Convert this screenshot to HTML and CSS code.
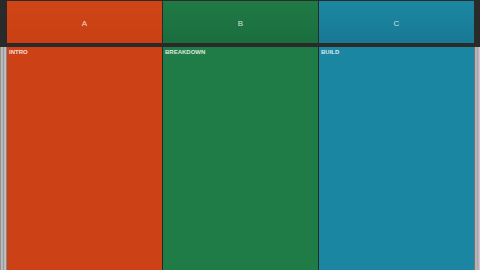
FILE: index.html
```html
<!DOCTYPE html>
<html lang="en">
<head>
    <meta charset="UTF-8">
    <title>Board</title>
    <link rel="stylesheet" href="styles.css">
</head>
<body>
    <div class="header">
        <div class="head-cell orange">A</div>
        <div class="head-cell green">B</div>
        <div class="head-cell teal">C</div>
    </div>
    <div class="board">
        <div class="rail left"></div>
        <div class="columns">
            <div class="column orange"><span class="label">INTRO</span></div>
            <div class="column green"><span class="label">BREAKDOWN</span></div>
            <div class="column teal"><span class="label">BUILD</span></div>
        </div>
        <div class="rail right"></div>
    </div>
</body>
</html>
```

FILE: styles.css
```css
body {
    margin: 0;
    width: 480px;
    height: 270px;
    overflow: hidden;
    background-color: #2a2a2a;
    font-family: "Liberation Sans", Arial, sans-serif;
    display: flex;
    flex-direction: column;
}
.header {
    display: flex;
    gap: 1px;
    height: 42px;
    padding: 1px 6px 0 7px;
    border-bottom: 4px solid #2a2a2a;
}
.head-cell {
    flex: 1;
    display: flex;
    justify-content: center;
    align-items: center;
    padding-top: 2px;
    font-size: 8px;
    color: rgba(255, 255, 255, 0.8);
}
.head-cell.orange {
    background: linear-gradient(#d04516, #c84014);
}
.head-cell.green {
    background: linear-gradient(#1f7a45, #1b6e3e);
}
.head-cell.teal {
    background: linear-gradient(#1c87a2, #187993);
}
.board {
    flex: 1;
    display: flex;
}
.rail {
    width: 7px;
}
.rail.left {
    background: linear-gradient(90deg, #7a7a7a, #c8c8c8 25%, #9a9a9a 50%, #d0d0d0 75%, #666 100%);
}
.rail.right {
    width: 6px;
    background: linear-gradient(90deg, #555, #c4c4c4 30%, #a8a0a8 60%, #d8d0d8 100%);
}
.columns {
    flex: 1;
    display: flex;
    gap: 1px;
    background-color: #1f2a22;
}
.column {
    flex: 1;
    padding: 1px 2px;
    font-size: 6px;
    line-height: 8px;
}
.column.orange {
    background-color: #cc4216;
}
.column.green {
    background-color: #1f7c47;
}
.column.teal {
    background-color: #1b86a1;
}
.label {
    font-weight: bold;
    color: rgba(255, 255, 255, 0.85);
}
```
